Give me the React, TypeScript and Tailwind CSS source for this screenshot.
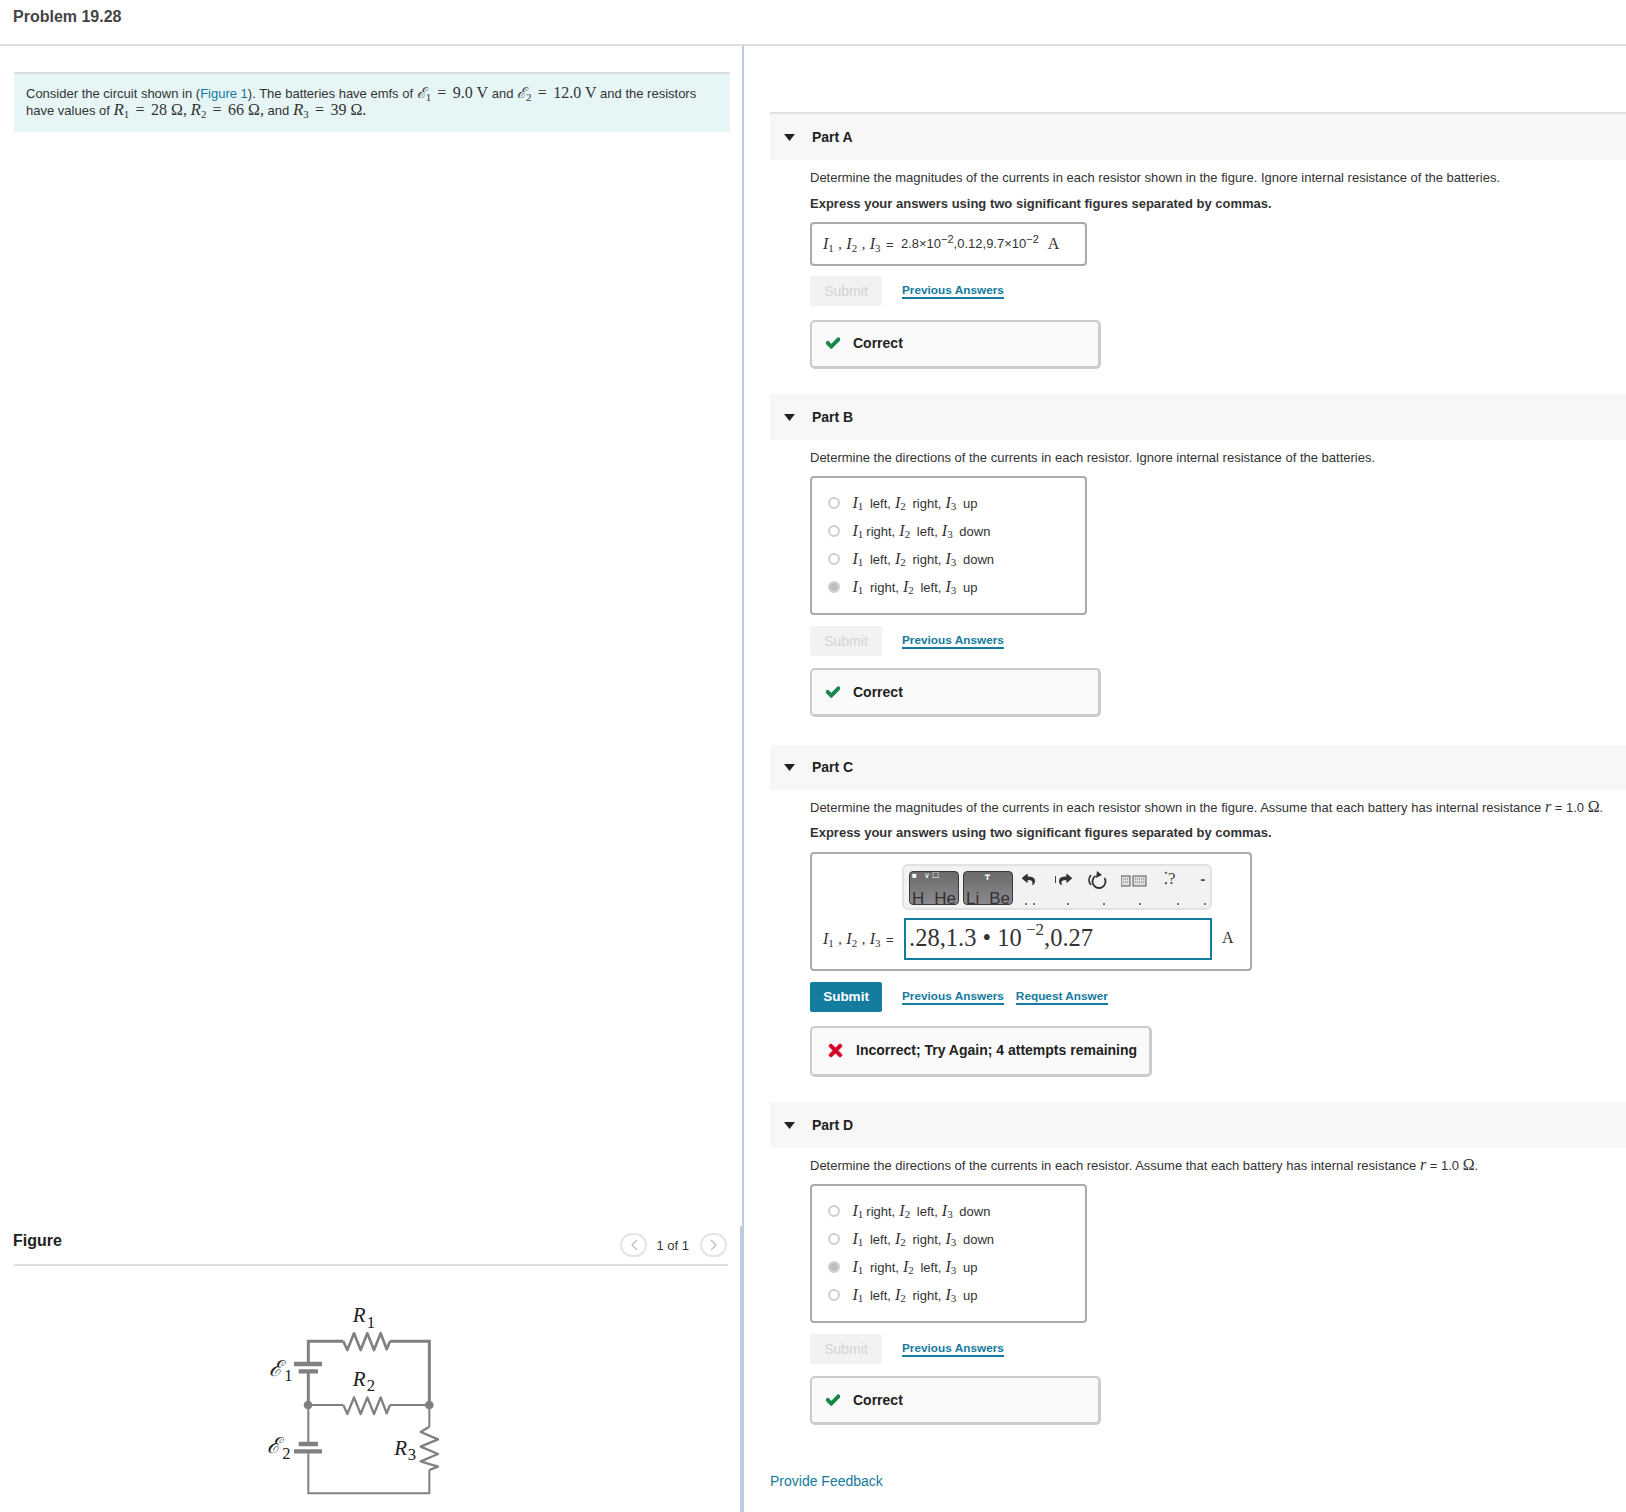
import { FaCheck, FaTimes, FaReply, FaShare } from 'react-icons/fa';

const I = ({ n }: { n: number }) => (
  <span className="font-['Liberation_Serif'] text-[16px] text-[#333]">
    <i>I</i>
    <sub className="text-[11px]">{n}</sub>
  </span>
);

// current symbol inside running option text, a bit more air after it
const RI = ({ n }: { n: number }) => (
  <span className="ml-[0.5px] mr-[3px]">
    <I n={n} />
  </span>
);

const R = ({ n }: { n: number }) => (
  <span className="font-['Liberation_Serif'] text-[17px]">
    <i>R</i>
    <sub className="text-[11px]">{n}</sub>
  </span>
);

const Emf = ({ n }: { n: number }) => (
  <span className="font-['Liberation_Serif'] text-[16px]">
    <i className="font-['DejaVu_Serif'] text-[15px]">ℰ</i>
    <sub className="text-[11px]">{n}</sub>
  </span>
);

const M = ({ children }: { children: React.ReactNode }) => (
  <span className="font-['Liberation_Serif'] text-[16px]">{children}</span>
);

const Eq = ({ children }: { children: React.ReactNode }) => (
  <M>
    <span className="mx-[2.5px]">=</span> {children}
  </M>
);

const CurrentsLabel = () => (
  <span className="whitespace-pre text-[13px]">
    <I n={1} />
    <span className="font-['Liberation_Serif'] text-[14px] mx-[1px]"> , </span>
    <I n={2} />
    <span className="font-['Liberation_Serif'] text-[14px] mx-[1px]"> , </span>
    <I n={3} />
    <span className="ml-[2px]"> =</span>
  </span>
);

const PartHeader = ({ title, border, tall }: { title: string; border?: boolean; tall?: boolean }) => (
  <div
    className={`flex items-center bg-[#f7f7f7] pl-[14px] ${border ? 'border-t-2 border-[#e0e0e0] h-[48px]' : tall ? 'h-[46px]' : 'h-[45px]'}`}
  >
    <svg width="11" height="7" viewBox="0 0 11 7" className="mr-[17px]">
      <polygon points="0,0 11,0 5.5,7" fill="#222" />
    </svg>
    <span className="text-[14px] font-bold text-[#222]">{title}</span>
  </div>
);

const Links = ({ request }: { request?: boolean }) => (
  <div className="flex items-center gap-3 ml-5">
    <a className="text-[11.8px] leading-[14px] font-bold text-[#147a9e] border-b-2 border-[#147a9e]">Previous Answers</a>
    {request && (
      <a className="text-[11.8px] leading-[14px] font-bold text-[#147a9e] border-b-2 border-[#147a9e]">Request Answer</a>
    )}
  </div>
);

const SubmitRow = ({ active, request }: { active?: boolean; request?: boolean }) => (
  <div className="flex items-center">
    <button
      className={`w-[72px] h-[30px] rounded-[2px] ${active ? 'text-[13.5px] bg-[#147c9e] text-white font-bold' : 'text-[14px] bg-[#f2f2f2] text-[#d4d4d4]'}`}
    >
      Submit
    </button>
    <Links request={request} />
  </div>
);

const Correct = ({ low }: { low?: boolean }) => (
  <div
    className={`flex items-center w-[291px] h-[49px] mt-[12px] bg-[#fafafa] border-2 border-b-[3px] border-r-[3px] border-[#cccccc] rounded-[5px] pl-[14px] ${low ? '' : 'pb-[2px]'}`}
  >
    <FaCheck className="text-[#16874a] text-[14px] stroke-current stroke-[40] mr-[13px]" />
    <span className="text-[14px] font-bold text-[#222]">Correct</span>
  </div>
);

const Radio = ({ checked, children }: { checked?: boolean; children: React.ReactNode }) => (
  <div className="flex items-center h-[28px] pl-[16px]">
    <span className="flex items-center justify-center w-[12px] h-[12px] rounded-full border-2 border-[#cfcfcf] mr-[12px]">
      {checked && <span className="w-[8px] h-[8px] rounded-full bg-[#bdbdbd]" />}
    </span>
    <span className="text-[13px] text-[#333] whitespace-pre -mt-[1px]">{children}</span>
  </div>
);

const RadioBox = ({ children }: { children: React.ReactNode }) => (
  <div className="w-[277px] h-[139px] border-2 border-[#aaaaaa] rounded-[4px] pt-[11px] bg-white">{children}</div>
);

const Opt1 = ({ a, b, c }: { a: string; b: string; c: string }) => (
  <>
    <RI n={1} /> {a}, <RI n={2} /> {b}, <RI n={3} /> {c}
  </>
);

const PeriodicBtn = ({ left, right, top }: { left: string; right: string; top: string }) => (
  <div className="flex flex-col w-[50px] h-[34px] rounded-[4px] border border-[#3a3a3a] bg-gradient-to-b from-[#6a6a6a] to-[#8c8a8f] overflow-hidden text-[#333]">
    <span className="text-[8px] leading-[8px] text-white pl-[2px] whitespace-pre">{top}</span>
    <span className="flex justify-between px-[2px] text-[17px] leading-[17px] h-[14px] mt-auto whitespace-pre">
      <span>{left}</span>
      <span>{right}</span>
    </span>
  </div>
);

const toolbarDots = ['left-[121px]', 'left-[129px]', 'left-[163px]', 'left-[199px]', 'left-[235px]', 'left-[273px]', 'left-[300px]'];

const Toolbar = () => (
  <div className="relative flex items-start w-[310px] h-[46px] ml-[90px] mt-[10px] pl-[5px] pt-[5px] bg-[#f2f2f2] border-2 border-[#e2e2e2] rounded-[6px]">
    <PeriodicBtn left="H" right="He" top="■   ∨ ☐" />
    <div className="ml-[4px]">
      <PeriodicBtn left="Li" right="Be" top="  ▔▔ ┳" />
    </div>
    <FaReply className="ml-[9px] mt-[2px] text-[13px] text-[#333]" />
    <div className="ml-[20px] mt-[2px] flex items-center text-[#333]">
      <span className="w-[1px] h-[7px] bg-[#444] mr-[3px]" />
      <FaShare className="text-[13px]" />
    </div>
    <svg width="22" height="18" viewBox="0 0 22 18" fill="none" className="ml-[15px]">
      <path d="M4 4 C1.5 7 1.5 11 4 14" stroke="#333" strokeWidth="1.6" />
      <path d="M9 4 A6.5 6.5 0 1 0 18 6" stroke="#333" strokeWidth="1.8" transform="translate(-0.5 1)" />
      <polygon points="10,0 15,4 9,7" fill="#333" />
    </svg>
    <svg width="26" height="12" viewBox="0 0 26 12" className="ml-[12px] mt-[4px]">
      <rect x="0" y="1" width="9" height="10" fill="#ddd" stroke="#555" />
      <rect x="12" y="1" width="13" height="10" fill="#ddd" stroke="#555" />
      <path d="M2 4h5M2 7h5M14 4h9M14 7h9" stroke="#777" strokeDasharray="1 1" />
    </svg>
    <span className="ml-[17px] -mt-[1px] text-[17px] leading-[18px] text-[#444] font-['Liberation_Serif']">⁚?</span>
    <span className="ml-[25px] -mt-[1px] text-[14px] leading-[18px] font-bold text-[#444]">-</span>
    {toolbarDots.map((left) => (
      <span key={left} className={`absolute top-[37px] ${left} w-[1.5px] h-[1.5px] bg-[#777]`} />
    ))}
  </div>
);

export default function App() {
  return (
    <div className="w-[1626px] h-[1512px] overflow-hidden bg-white font-['Liberation_Sans',sans-serif] text-[#333]">
      <div className="h-[46px] border-b-2 border-[#dddddd] pl-[13px] pt-[6px]">
        <h1 className="text-[16px] leading-[21px] font-bold text-[#444]">Problem 19.28</h1>
      </div>

      <div className="flex">
        {/* Left column */}
        <div className="w-[744px] shrink-0">
          <div className="h-[1180px] border-r-2 border-[#bccde0] pt-[26px]">
            <div className="ml-[14px] w-[716px] h-[60px] bg-[#e6f6f7] border-t-2 border-[#dddddd] pl-[12px] pt-[11px] text-[13px] leading-[16px] text-[#333]">
              <div>
                Consider the circuit shown in (<span className="text-[#147a9e]">Figure 1</span>). The batteries have emfs of{' '}
                <Emf n={1} /> <Eq>9.0 V</Eq> and <Emf n={2} /> <Eq>12.0 V</Eq> and the resistors
              </div>
              <div>
                have values of <R n={1} /> <Eq>28 Ω,</Eq> <R n={2} /> <Eq>66 Ω,</Eq> and <R n={3} /> <Eq>39 Ω.</Eq>
              </div>
            </div>
          </div>

          <div className="h-[286px] border-r-4 border-[#bccde0]">
            <div className="flex items-center justify-between ml-[14px] w-[714px] pr-[1px] h-[40px] border-b-2 border-[#dddddd]">
              <span className="text-[16px] font-bold text-[#222] -ml-[1px] -mt-[9px]">Figure</span>
              <div className="flex items-center">
                <span className="flex items-center justify-center w-[27px] h-[24px] rounded-full border-2 border-[#e4e4e4] text-[#bbb]">
                  <svg width="8" height="12" viewBox="0 0 8 12" fill="none" stroke="#bbb" strokeWidth="1.2">
                    <path d="M7 1 L2 6 L7 11" />
                  </svg>
                </span>
                <span className="ml-[9px] mr-[11px] text-[13px] text-[#333] mt-[1px]">1 of 1</span>
                <span className="flex items-center justify-center w-[27px] h-[24px] rounded-full border-2 border-[#e4e4e4]">
                  <svg width="8" height="12" viewBox="0 0 8 12" fill="none" stroke="#bbb" strokeWidth="1.2">
                    <path d="M1 1 L6 6 L1 11" />
                  </svg>
                </span>
              </div>
            </div>
            <svg width="230" height="232" viewBox="0 0 690 696" className="ml-[240px] mt-[14px]" fill="none" stroke="#808080">
              <path d="M310 184 H205 V248 M205 274 V375" strokeWidth="9" />
              <path d="M450 184 H568 V375" strokeWidth="9" />
              <path d="M205 375 H310 M450 375 H568" strokeWidth="6" />
              <path d="M568 375 V440 M568 570 V640 H205 V514 M205 492 V375" strokeWidth="6" />
              <path d="M310 184 L322 210 L342 160 L362 210 L382 160 L402 210 L422 160 L440 208 L450 184" strokeWidth="8" strokeLinejoin="round" />
              <path d="M310 375 L322 402 L342 352 L362 402 L382 352 L402 402 L422 352 L440 400 L450 375" strokeWidth="7" strokeLinejoin="round" />
              <path d="M568 440 L542 456 L594 478 L542 500 L594 522 L542 544 L594 560 L568 570" strokeWidth="7" strokeLinejoin="round" />
              <path d="M162 252 H246 M176 274 H234 M176 492 H234 M162 514 H246" strokeWidth="13" />
              <circle cx="204" cy="375" r="13" fill="#808080" stroke="none" />
              <circle cx="568" cy="375" r="13" fill="#808080" stroke="none" />
              <g fill="#222" stroke="none" fontFamily="'Liberation Serif'" fontSize="63">
                <text x="338" y="125" fontStyle="italic">R</text>
                <text x="380" y="143" fontSize="50">1</text>
                <text x="338" y="318" fontStyle="italic">R</text>
                <text x="380" y="333" fontSize="50">2</text>
                <text x="463" y="525" fontStyle="italic">R</text>
                <text x="503" y="541" fontSize="50">3</text>
                <text x="88" y="287" fontStyle="italic" fontFamily="'DejaVu Serif'" fontSize="66">ℰ</text>
                <text x="133" y="302" fontSize="50">1</text>
                <text x="81" y="520" fontStyle="italic" fontFamily="'DejaVu Serif'" fontSize="66">ℰ</text>
                <text x="127" y="537" fontSize="50">2</text>
              </g>
            </svg>
          </div>
        </div>

        {/* Right column */}
        <div className="flex-1 pl-[26px] pt-[66px] min-w-0">
          <PartHeader title="Part A" border />
          <div className="pl-[40px] pt-[9px]">
            <p className="text-[13px] leading-[18px] text-[#333]">
              Determine the magnitudes of the currents in each resistor shown in the figure. Ignore internal resistance of the batteries.
            </p>
            <p className="text-[13px] leading-[18px] font-bold text-[#333] mt-[8px]">
              Express your answers using two significant figures separated by commas.
            </p>
            <div className="flex items-center w-[277px] h-[44px] mt-[9px] mb-[10px] border-2 border-[#aaaaaa] rounded-[4px] pl-[11px] whitespace-pre">
              <CurrentsLabel />
              <span className="text-[13px]">  2.8×10</span>
              <sup className="text-[11px]">−2</sup>
              <span className="text-[13px]">,0.12,9.7×10</span>
              <sup className="text-[11px]">−2</sup>
              <span className="font-['Liberation_Serif'] text-[16px] ml-[9px]">A</span>
            </div>
            <SubmitRow />
            <div className="mt-[14px]">
              <Correct />
            </div>
          </div>

          <div className="mt-[25px]">
            <PartHeader title="Part B" tall />
          </div>
          <div className="pl-[40px] pt-[9px]">
            <p className="text-[13px] leading-[18px] text-[#333]">
              Determine the directions of the currents in each resistor. Ignore internal resistance of the batteries.
            </p>
            <div className="mt-[9px] mb-[11px]">
              <RadioBox>
                <Radio><Opt1 a="left" b="right" c="up" /></Radio>
                <Radio><RI n={1} />right, <RI n={2} /> left, <RI n={3} /> down</Radio>
                <Radio><Opt1 a="left" b="right" c="down" /></Radio>
                <Radio checked><Opt1 a="right" b="left" c="up" /></Radio>
              </RadioBox>
            </div>
            <SubmitRow />
            <Correct low />
          </div>

          <div className="mt-[28px]">
            <PartHeader title="Part C" />
          </div>
          <div className="pl-[40px] pt-[8px]">
            <p className="text-[13px] leading-[18px] text-[#333] whitespace-nowrap">
              Determine the magnitudes of the currents in each resistor shown in the figure. Assume that each battery has internal resistance{' '}
              <M><i>r</i></M> = 1.0 <M>Ω</M>.
            </p>
            <p className="text-[13px] leading-[18px] font-bold text-[#333] mt-[7px]">
              Express your answers using two significant figures separated by commas.
            </p>
            <div className="w-[442px] h-[119px] mt-[10px] mb-[11px] border-2 border-[#aaaaaa] rounded-[4px]">
              <Toolbar />
              <div className="flex items-center mt-[8px] pl-[11px]">
                <div className="w-[81px]">
                  <CurrentsLabel />
                </div>
                <div className="flex items-center w-[308px] h-[42px] border-2 border-[#147a9e] pl-[3px] pb-[1px] font-['Liberation_Serif'] text-[24.5px] text-[#333] whitespace-pre">
                  .28,1.3 • 10<sup className="text-[17px]"> −2</sup>,0.27
                </div>
                <span className="ml-[10px] -mt-[2px] font-['Liberation_Serif'] text-[16px]">A</span>
              </div>
            </div>
            <SubmitRow active request />
            <div className="flex items-center w-[342px] h-[51px] mt-[14px] pb-[2px] bg-[#fafafa] border-2 border-b-[3px] border-r-[3px] border-[#cccccc] rounded-[5px] pl-[14px]">
              <FaTimes className="text-[#d4002a] text-[19px] stroke-current stroke-[20] mr-[11px]" />
              <span className="text-[14px] font-bold text-[#222]">Incorrect; Try Again; 4 attempts remaining</span>
            </div>
          </div>

          <div className="mt-[25px]">
            <PartHeader title="Part D" tall />
          </div>
          <div className="pl-[40px] pt-[8px]">
            <p className="text-[13px] leading-[18px] text-[#333]">
              Determine the directions of the currents in each resistor. Assume that each battery has internal resistance{' '}
              <M><i>r</i></M> = 1.0 <M>Ω</M>.
            </p>
            <div className="mt-[9px] mb-[11px]">
              <RadioBox>
                <Radio><RI n={1} />right, <RI n={2} /> left, <RI n={3} /> down</Radio>
                <Radio><Opt1 a="left" b="right" c="down" /></Radio>
                <Radio checked><Opt1 a="right" b="left" c="up" /></Radio>
                <Radio><Opt1 a="left" b="right" c="up" /></Radio>
              </RadioBox>
            </div>
            <SubmitRow />
            <Correct low />
          </div>

          <a className="block mt-[46px] text-[14px] leading-[20px] text-[#147a9e]">Provide Feedback</a>
        </div>
      </div>
    </div>
  );
}
